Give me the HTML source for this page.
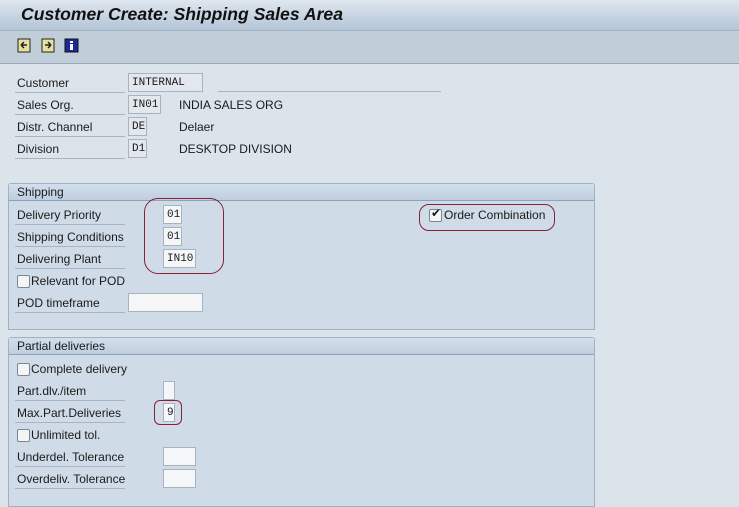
<!DOCTYPE html>
<html><head><meta charset="utf-8"><style>
*{margin:0;padding:0;box-sizing:border-box}
body{width:739px;height:501px;overflow:hidden;background:#dbe3eb;font-family:"Liberation Sans",sans-serif;font-size:12px;color:#1a1a1a;position:relative}
.a{position:absolute}
#title{left:0;top:0;width:739px;height:31px;background:linear-gradient(#dfe7ef,#b3c5d7);border-bottom:1px solid #9fb2c5}
#title span{position:absolute;left:21px;top:4px;font-family:"Liberation Sans",sans-serif;font-weight:bold;font-style:italic;font-size:17.6px;color:#111}
#tb{left:0;top:31px;width:739px;height:33px;background:#c1cdd9;border-bottom:1px solid #98a8b8}
.lbl{position:absolute;left:15px;width:110px;height:20px;border-bottom:1px solid #a9b4c0;padding-left:2px;line-height:21px;white-space:nowrap}
.in{position:absolute;height:19px;background:#f4f6f8;border:1px solid #a8b3bf;font-family:"Liberation Mono",monospace;font-size:11px;line-height:18px;padding-left:3px}
.ro{background:#e3e8ee}
.txt{position:absolute;line-height:21px}
.grp{position:absolute;left:8px;width:587px;background:#cfdbe7;border:1px solid #9fb0c2;border-radius:3px 3px 0 0}
.gh{height:17px;background:linear-gradient(#d2dfec,#bfcfdf);border-bottom:1px solid #8fa3b8;padding-left:8px;line-height:16px}
.cb{position:absolute;width:13px;height:13px;border:1px solid #7a8896;background:#f5f5f5;border-radius:2px}
.oval{position:absolute;border:1px solid #8a1f3a;border-radius:10px}
</style></head><body>
<div id="title" class="a"><span>Customer Create: Shipping Sales Area</span></div>
<div id="tb" class="a">
<svg class="a" style="left:17px;top:7px" width="62" height="16">
<rect x="1" y="1" width="12" height="13" fill="#e8e0a0" stroke="#222"/><path d="M4 7h6M4 7l3-3M4 7l3 3" stroke="#222" stroke-width="1.5" fill="none"/>
<rect x="25" y="1" width="12" height="13" fill="#e8e0a0" stroke="#222"/><path d="M34 7h-6M34 7l-3-3M34 7l-3 3" stroke="#222" stroke-width="1.5" fill="none"/>
<rect x="48" y="1" width="13" height="13" fill="#1a2a9a" stroke="#111"/><rect x="53" y="3" width="3" height="2" fill="#fff"/><rect x="53" y="6" width="3" height="6" fill="#fff"/>
</svg></div>
<div class="lbl" style="top:73px">Customer</div>
<div class="in ro" style="left:128px;top:73px;width:75px">INTERNAL</div>
<div class="a" style="left:218px;top:91px;width:223px;border-top:1px solid #a9b4c0"></div>
<div class="lbl" style="top:95px">Sales Org.</div>
<div class="in ro" style="left:128px;top:95px;width:33px">IN01</div>
<div class="txt" style="left:179px;top:95px">INDIA SALES ORG</div>
<div class="lbl" style="top:117px">Distr. Channel</div>
<div class="in ro" style="left:128px;top:117px;width:19px">DE</div>
<div class="txt" style="left:179px;top:117px">Delaer</div>
<div class="lbl" style="top:139px">Division</div>
<div class="in ro" style="left:128px;top:139px;width:19px">D1</div>
<div class="txt" style="left:179px;top:139px">DESKTOP DIVISION</div>

<div class="grp" style="top:183px;height:147px"><div class="gh">Shipping</div></div>
<div class="lbl" style="top:205px">Delivery Priority</div>
<div class="in" style="left:163px;top:205px;width:19px">01</div>
<div class="lbl" style="top:227px">Shipping Conditions</div>
<div class="in" style="left:163px;top:227px;width:19px">01</div>
<div class="lbl" style="top:249px">Delivering Plant</div>
<div class="in" style="left:163px;top:249px;width:33px">IN10</div>
<div class="oval" style="left:144px;top:198px;width:80px;height:76px;border-radius:14px"></div>
<div class="cb" style="left:17px;top:275px"></div><div class="txt" style="left:31px;top:271px">Relevant for POD</div>
<div class="lbl" style="top:293px">POD timeframe</div>
<div class="in" style="left:128px;top:293px;width:75px"></div>
<div class="cb" style="left:429px;top:209px"></div><div class="a" style="left:431px;top:206px;font-size:12px;font-family:'DejaVu Sans',sans-serif">✔</div>
<div class="txt" style="left:444px;top:205px">Order Combination</div>
<div class="oval" style="left:419px;top:204px;width:136px;height:27px"></div>

<div class="grp" style="top:337px;height:170px"><div class="gh">Partial deliveries</div></div>
<div class="cb" style="left:17px;top:363px"></div><div class="txt" style="left:31px;top:359px">Complete delivery</div>
<div class="lbl" style="top:381px">Part.dlv./item</div>
<div class="in" style="left:163px;top:381px;width:12px"></div>
<div class="lbl" style="top:403px">Max.Part.Deliveries</div>
<div class="in" style="left:163px;top:403px;width:12px">9</div>
<div class="oval" style="left:154px;top:400px;width:28px;height:25px;border-radius:6px"></div>
<div class="cb" style="left:17px;top:429px"></div><div class="txt" style="left:31px;top:425px">Unlimited tol.</div>
<div class="lbl" style="top:447px">Underdel. Tolerance</div>
<div class="in" style="left:163px;top:447px;width:33px"></div>
<div class="lbl" style="top:469px">Overdeliv. Tolerance</div>
<div class="in" style="left:163px;top:469px;width:33px"></div>
</body></html>
